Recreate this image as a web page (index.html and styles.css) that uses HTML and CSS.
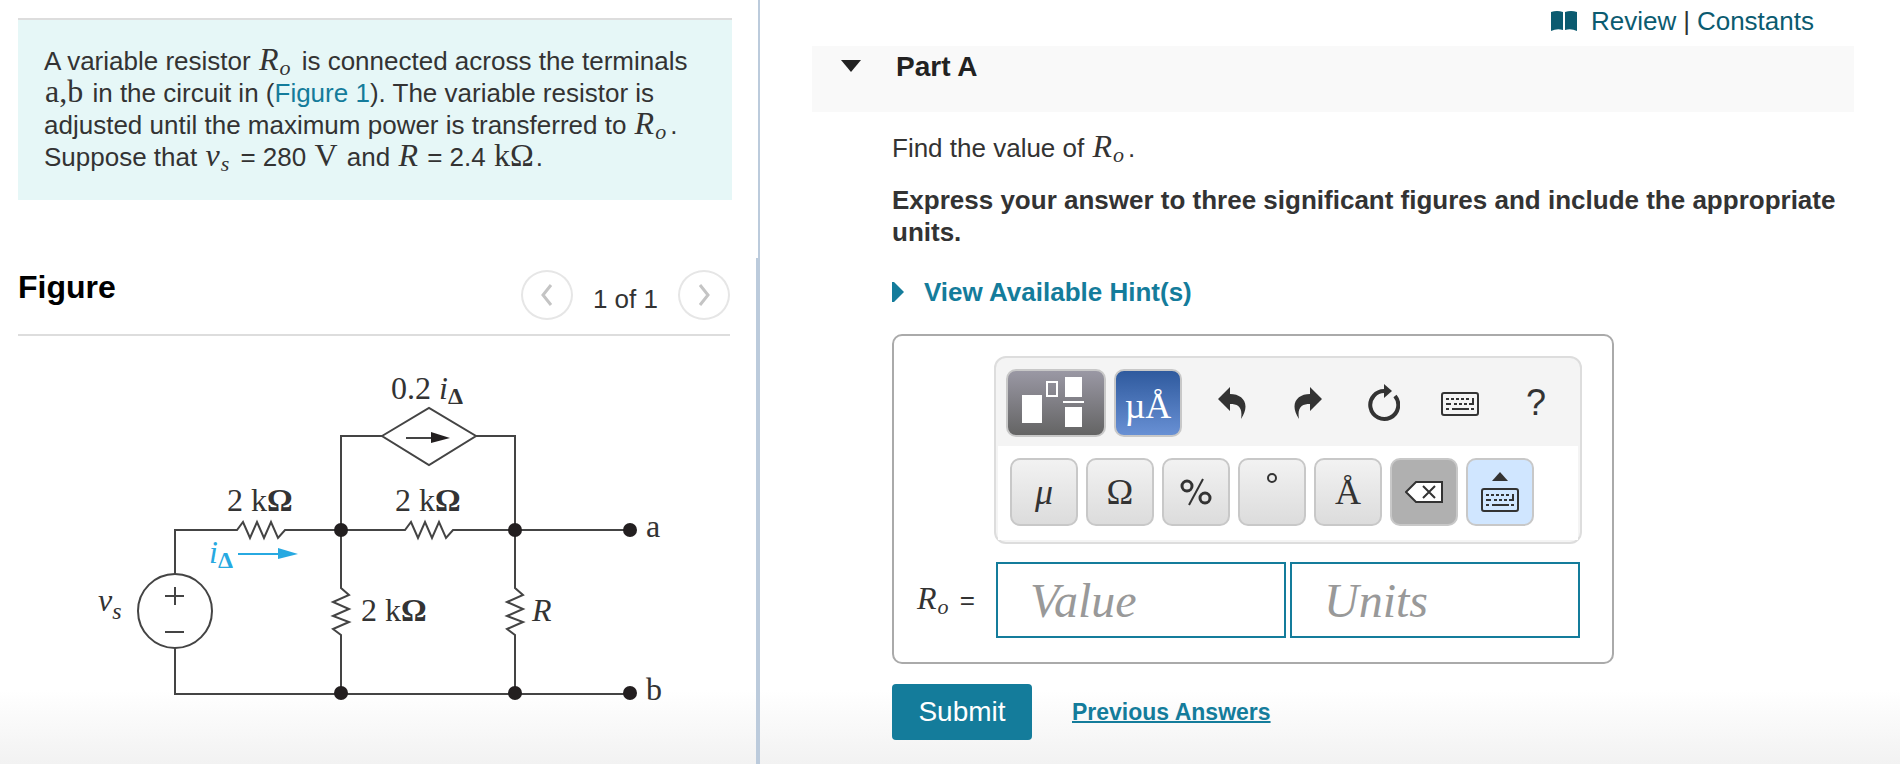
FILE: index.html
```html
<!DOCTYPE html>
<html lang="en">
<head>
  <meta charset="UTF-8" />
  <title>Part A</title>
  <link rel="stylesheet" href="styles.css">
</head>
<body>
  <div class="page">
    <section class="left-pane">
      <div class="problem">
        <p>A variable resistor <span class="math"><i>R</i><sub>o</sub></span> is connected across the terminals
          <span class="math">a,b</span> in the circuit in (<a href="#figure">Figure 1</a>). The variable resistor is adjusted until the maximum power is transferred to <span class="math"><i>R</i><sub>o</sub></span>. Suppose that <span class="math"><i>v</i><sub>s</sub></span> = 280 <span class="math">V</span> and <span class="math"><i>R</i></span> = 2.4 <span class="math">kΩ</span>.</p>
      </div>

      <div class="figure" id="figure">
        <div class="figure-header">
          <h2>Figure</h2>
          <div class="pager">
            <button class="round" aria-label="Previous figure">
              <svg width="14" height="22" viewBox="0 0 14 22"><path d="M11 1L3 11L11 21" /></svg>
            </button>
            <span class="count">1 of 1</span>
            <button class="round" aria-label="Next figure">
              <svg width="14" height="22" viewBox="0 0 14 22"><path d="M3 1L11 11L3 21" /></svg>
            </button>
          </div>
        </div>

        <svg class="circuit" viewBox="18 335 712 380">
          <!-- wires -->
          <g class="wire">
            <path d="M175 573V529H237L243 521L250 537L257 521L264 537L271 521L278 537L285 529H405L411 521L418 537L425 521L432 537L439 521L446 537L453 529H630" />
            <path d="M175 647V693H630" />
            <path d="M341 529V435H382M476 435H515V529" />
            <path d="M382 435L429 407L476 435L429 464Z" />
            <path d="M341 529V587L349 594L333 601L349 608L333 615L349 621L333 628L341 634V693" />
            <path d="M515 529V587L523 594L507 601L523 608L507 615L523 621L507 628L515 634V693" />
            <circle cx="175" cy="610" r="37" />
            <path d="M165 595H184M175 586V604M165 631H184" />
            <path d="M406 437H434" />
          </g>
          <path class="dot" d="M431 431L450 437L431 442Z" />
          <path class="blue-line" d="M238 553H280" />
          <path class="blue" d="M278 547L298 553L278 558Z" />
          <!-- nodes -->
          <g class="dot">
            <circle cx="341" cy="529" r="7" />
            <circle cx="515" cy="529" r="7" />
            <circle cx="630" cy="529" r="7" />
            <circle cx="341" cy="692" r="7" />
            <circle cx="515" cy="692" r="7" />
            <circle cx="630" cy="692" r="7" />
          </g>
          <!-- labels -->
          <g class="label">
            <text x="391" y="398">0.2 <tspan class="it">i</tspan><tspan class="delta" dy="5">Δ</tspan></text>
            <text x="227" y="510">2 k<tspan class="ohm">Ω</tspan></text>
            <text x="395" y="510">2 k<tspan class="ohm">Ω</tspan></text>
            <text x="361" y="620">2 k<tspan class="ohm">Ω</tspan></text>
            <text x="532" y="620" class="it">R</text>
            <text x="98" y="610" class="it">v<tspan class="small" dy="8">s</tspan></text>
            <text x="646" y="536">a</text>
            <text x="646" y="699">b</text>
            <text x="209" y="562" class="blue it">i<tspan class="delta" dy="5">Δ</tspan></text>
          </g>
        </svg>
      </div>
    </section>

    <main class="right-pane">
      <nav class="top-links">
        <svg class="book" width="26" height="20" viewBox="0 0 26 20"><path d="M0 1Q6 -1 12 1V19Q6 17 0 20ZM14 1Q20 -1 26 1V20Q20 17 14 19Z" /></svg>
        <a href="#">Review</a><span class="sep">|</span><a href="#">Constants</a>
      </nav>

      <header class="part-header">
        <svg class="caret" width="22" height="12" viewBox="0 0 22 12"><path d="M1 0H21L11 12Z" /></svg>
        <h1>Part A</h1>
      </header>

      <div class="part-body">
        <p>Find the value of <span class="math"><i>R</i><sub>o</sub></span>.</p>
        <p class="instructions">Express your answer to three significant figures and include the appropriate units.</p>
        <a class="hints" href="#">
          <svg width="12" height="20" viewBox="0 0 12 20"><path d="M0 0H2L12 10L2 20H0Z" /></svg>
          <span>View Available Hint(s)</span>
        </a>

        <form class="answer-box">
          <div class="toolbar">
            <div class="tools">
              <button type="button" class="key templates" aria-label="Templates">
                <svg width="96" height="64" viewBox="0 0 96 64">
                  <path fill="#fff" d="M14 24H34V52H14ZM57 6H74V26H57ZM57 36H74V56H57ZM55 30H76V32H55Z" />
                  <path fill="none" stroke="#fff" stroke-width="2" d="M39 11H49V25H39Z" />
                </svg>
              </button>
              <button type="button" class="key symbols" aria-label="Symbols">µÅ</button>
              <button type="button" class="icon-btn" aria-label="Undo">
                <svg width="28" height="32" viewBox="0 0 28 32"><path d="M0 12L12 0V7C25 7 33 17 23 32C25 20 20 17 12 17V24Z" /></svg>
              </button>
              <button type="button" class="icon-btn" aria-label="Redo">
                <svg width="28" height="32" viewBox="0 0 28 32"><path d="M28 12L16 0V7C3 7 -5 17 5 32C3 20 8 17 16 17V24Z" /></svg>
              </button>
              <button type="button" class="icon-btn" aria-label="Reset">
                <svg width="32" height="38" viewBox="0 0 32 38">
                  <path fill="none" stroke="#333" stroke-width="4" d="M27 12A14 14 0 1 1 17 7" />
                  <path fill="#333" d="M16 0L24 7L16 14Z" />
                </svg>
              </button>
              <button type="button" class="icon-btn" aria-label="Keyboard">
                <svg class="kb" width="38" height="26" viewBox="0 0 38 26">
                  <g transform="translate(0 2)">
                    <rect x="1" y="1" width="36" height="22" rx="2" />
                    <path d="M5 7H30" stroke-dasharray="3 2" />
                    <path d="M5 12H10M13 12H16M18 12H21M23 12H26M28 12H32V6" />
                    <path d="M5 17H8M11 17H28M30 17H33" />
                  </g>
                </svg>
              </button>
              <button type="button" class="icon-btn help" aria-label="Help">?</button>
            </div>
            <div class="keys">
              <button type="button" class="key"><i>μ</i></button>
              <button type="button" class="key">Ω</button>
              <button type="button" class="key" aria-label="%">
                <svg width="32" height="28" viewBox="0 0 32 28"><g fill="none" stroke="#333"><circle cx="7" cy="8" r="5" stroke-width="3" /><circle cx="25" cy="20" r="5" stroke-width="3" /><path d="M23 1L9 27" stroke-width="2" /></g></svg>
              </button>
              <button type="button" class="key degree" aria-label="degree">
                <svg width="10" height="10" viewBox="0 0 10 10"><circle cx="5" cy="5" r="4" fill="none" stroke="#333" stroke-width="2" /></svg>
              </button>
              <button type="button" class="key">Å</button>
              <button type="button" class="key delete" aria-label="Delete">
                <svg width="38" height="22" viewBox="0 0 38 22"><path fill="#fff" stroke="#333" stroke-width="2" d="M1 11L11 1H37V21H11Z" /><path stroke="#333" stroke-width="2" d="M18 5L30 17M30 5L18 17" /></svg>
              </button>
              <button type="button" class="key hide-kb" aria-label="Hide keyboard">
                <svg class="kb" width="38" height="40" viewBox="0 0 38 40">
                  <path class="solid" d="M11 9L19 0L27 9Z" />
                  <g transform="translate(0 16)">
                    <rect x="1" y="1" width="36" height="22" rx="2" />
                    <path d="M5 7H30" stroke-dasharray="3 2" />
                    <path d="M5 12H10M13 12H16M18 12H21M23 12H26M28 12H32V6" />
                    <path d="M5 17H8M11 17H28M30 17H33" />
                  </g>
                </svg>
              </button>
            </div>
          </div>

          <div class="answer-row">
            <label for="value"><span class="math"><i>R</i><sub>o</sub></span> =</label>
            <input type="text" id="value" placeholder="Value" />
            <input type="text" id="units" placeholder="Units" aria-label="Units" />
          </div>
        </form>

        <div class="actions">
          <button class="submit">Submit</button>
          <a href="#">Previous Answers</a>
        </div>
      </div>
    </main>
  </div>
</body>
</html>
```

FILE: styles.css
```css
* {
  box-sizing: border-box;
}

body {
  margin: 0;
  background: #fff;
  font-family: "Liberation Sans", Arial, sans-serif;
  font-size: 26px;
  line-height: 32px;
  color: #333;
}

h1, h2, p {
  margin: 0;
}

a {
  color: #147c9b;
  text-decoration: none;
}

button {
  font-family: inherit;
  padding: 0;
  cursor: pointer;
}

svg {
  display: block;
}

.page {
  display: flex;
  min-height: 100vh;
  background: linear-gradient(to top, #f2f2f2, #fff 74px);
}

/* formulas */
.math {
  font-family: "Liberation Serif", serif;
  font-size: 32px;
  line-height: 0;
  padding: 0 2px 0 1px;
}

.math sub {
  font-size: 22px;
  font-style: italic;
  line-height: 0;
  vertical-align: -5px;
  padding: 0 2px 0 1px;
}

/* left side */
.left-pane {
  flex: 0 0 40%;
  display: flex;
  flex-direction: column;
  padding-top: 18px;
  border-right: 2px solid #bccbdc;
}

.problem {
  margin: 0 26px 58px 18px;
  padding: 25px 26px 27px;
  background: #e6f7f7;
  border-top: 2px solid #ddd;
}

.figure {
  flex: 1;
  padding: 12px 26px 0 18px;
  border-right: 2px solid #bccbdc;
}

.figure-header {
  display: flex;
  justify-content: space-between;
  height: 66px;
  border-bottom: 2px solid #ddd;
}

.figure-header h2 {
  padding-top: 1px;
  font-size: 32px;
  color: #000;
}

.pager {
  display: flex;
  gap: 20px;
}

.count {
  padding-top: 13px;
}

.round {
  display: flex;
  align-items: center;
  justify-content: center;
  width: 52px;
  height: 50px;
  background: #fff;
  border: 2px solid #e6e6e6;
  border-radius: 50%;
}

.round path {
  fill: none;
  stroke: #c4c4c4;
  stroke-width: 3;
}

/* circuit drawing */
.circuit {
  width: 100%;
  max-width: 712px;
}

.wire {
  fill: none;
  stroke: #444;
  stroke-width: 2;
}

.dot {
  fill: #231f20;
}

.label {
  font-family: "Liberation Serif", serif;
  font-size: 32px;
  fill: #333;
}

.it {
  font-style: italic;
}

.small {
  font-size: 24px;
}

.ohm {
  font-weight: bold;
}

.delta {
  font-size: 24px;
  font-style: normal;
  font-weight: bold;
}

.blue {
  fill: #27a9e1;
}

.blue-line {
  stroke: #27a9e1;
  stroke-width: 2;
}

/* right side */
.right-pane {
  flex: 1;
  padding: 5px 46px 0 52px;
}

.top-links {
  display: flex;
  align-items: center;
  justify-content: flex-end;
  height: 32px;
  margin: 0 40px 9px 0;
}

.top-links a {
  color: #0b5b70;
}

.book {
  margin-right: 14px;
  fill: #0b5b70;
}

.sep {
  padding: 0 7px;
}

.part-header {
  display: flex;
  height: 66px;
  padding: 5px 28px;
  background: #f9f9f9;
}

.part-header h1 {
  margin-left: 34px;
  font-size: 28px;
  line-height: 32px;
  color: #222;
}

.caret {
  margin-top: 9px;
  fill: #222;
}

.part-body {
  padding: 20px 0 0 80px;
}

.instructions {
  margin: 20px 0 28px;
  font-weight: bold;
}

.hints {
  display: flex;
  align-items: center;
  gap: 20px;
  width: fit-content;
  margin-bottom: 26px;
  font-weight: bold;
}

.hints svg {
  fill: #147c9b;
}

.answer-box {
  width: 722px;
  max-width: 100%;
  margin-bottom: 20px;
  padding: 20px 30px 24px 20px;
  border: 2px solid #aaa;
  border-radius: 10px;
}

.toolbar {
  margin: 0 0 18px 80px;
  padding: 2px;
  background: #f4f4f4;
  border: 2px solid #ddd;
  border-radius: 12px;
}

.tools {
  display: flex;
  align-items: center;
  gap: 8px;
  height: 86px;
  padding: 0 8px;
}

.keys {
  display: flex;
  gap: 8px;
  padding: 12px 12px 14px;
  background: #fff;
}

.key {
  display: flex;
  align-items: center;
  justify-content: center;
  width: 68px;
  height: 68px;
  color: #333;
  background: linear-gradient(#f2f2f2, #dcdcdc);
  border: 2px solid #c8c8c8;
  border-radius: 10px;
  font-family: "Liberation Serif", serif;
  font-size: 36px;
}

.templates {
  width: 100px;
  background: linear-gradient(#9a98a4, #646464);
}

.symbols {
  margin-right: 8px;
  padding-top: 6px;
  color: #fff;
  background: linear-gradient(#2f5a9e, #6890d4);
}

.degree {
  align-items: flex-start;
  padding-top: 13px;
}

.delete {
  background: #b0b0b0;
}

.hide-kb {
  background: #d0e6ff;
}

.icon-btn {
  display: flex;
  align-items: center;
  justify-content: center;
  width: 68px;
  height: 68px;
  color: #333;
  background: none;
  border: none;
  font-size: 36px;
}

.icon-btn svg {
  fill: #333;
}

.icon-btn .kb,
.key .kb {
  fill: none;
  stroke: #333;
  stroke-width: 2;
}

.kb .solid {
  fill: #333;
  stroke: none;
}

.answer-row {
  display: flex;
  align-items: center;
  gap: 4px;
  padding-right: 2px;
}

.answer-row label {
  flex: 0 0 78px;
  padding-left: 2px;
}

.answer-row input {
  flex: 1;
  min-width: 0;
  height: 76px;
  padding: 0 32px;
  border: 2px solid #147c9b;
  font-family: "Liberation Serif", serif;
  font-size: 48px;
}

.answer-row input::placeholder {
  color: #999;
  font-style: italic;
}

.actions {
  display: flex;
  align-items: center;
  gap: 40px;
}

.submit {
  width: 140px;
  height: 56px;
  color: #fff;
  background: #147c9b;
  border: none;
  border-radius: 4px;
  font-size: 28px;
}

.actions a {
  font-size: 23px;
  font-weight: bold;
  text-decoration: underline;
  text-decoration-thickness: 2px;
}
```
